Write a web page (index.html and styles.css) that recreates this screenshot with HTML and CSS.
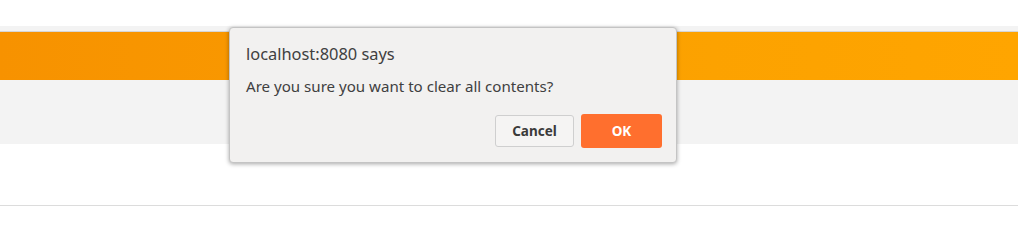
FILE: index.html
```html
<!DOCTYPE html>
<html>
<head>
<meta charset="utf-8">
<link rel="stylesheet" href="styles.css">
</head>
<body>
<div class="page">
  <div class="band">
    <div class="bar"></div>
  </div>
  <div class="rule"></div>
</div>
<div class="dialog">
  <div class="title">localhost:8080 says</div>
  <div class="msg">Are you sure you want to clear all contents?</div>
  <div class="actions">
    <button class="btn cancel">Cancel</button>
    <button class="btn ok">OK</button>
  </div>
</div>
</body>
</html>
```
FILE: styles.css
```css
html, body { margin: 0; padding: 0; background: #fff; }
body { width: 1018px; height: 230px; overflow: hidden; position: relative; font-family: "Noto Sans", "DejaVu Sans", sans-serif; }
.page { padding-top: 26px; }
.band { height: 118px; background: #f3f3f3; padding-top: 5px; box-sizing: border-box; }
.bar { height: 48px; border-top: 1px solid #d6d6d6; background: linear-gradient(90deg, #f79200 0%, #fca200 70%, #ffa500 100%); }
.rule { margin-top: 61px; height: 1px; background: #dcdcdc; }
.dialog {
  position: absolute; left: 229px; top: 27px; width: 416px; height: 134px;
  background: #f2f1f0; border: 1px solid #c4c4c4; border-radius: 4px;
  box-shadow: 0 1px 4px rgba(0,0,0,0.35);
  padding: 0 14px 0 16px;
  color: #404040;
}
.title { font-size: 16.4px; margin-top: 14px; line-height: 24px; }
.msg { font-size: 15.1px; margin-top: 9px; line-height: 22px; }
.actions { display: flex; justify-content: flex-end; align-items: center; gap: 7px; margin-top: 17px; }
.btn { font-family: inherit; font-weight: bold; font-size: 13.5px; border-radius: 3px; cursor: default; }
.cancel { width: 79px; height: 32px; background: #f5f4f3; border: 1px solid #cfcfcf; color: #3a3a3a; }
.ok { width: 81px; height: 34px; background: #ff6f2e; border: none; color: #fff; }
```
